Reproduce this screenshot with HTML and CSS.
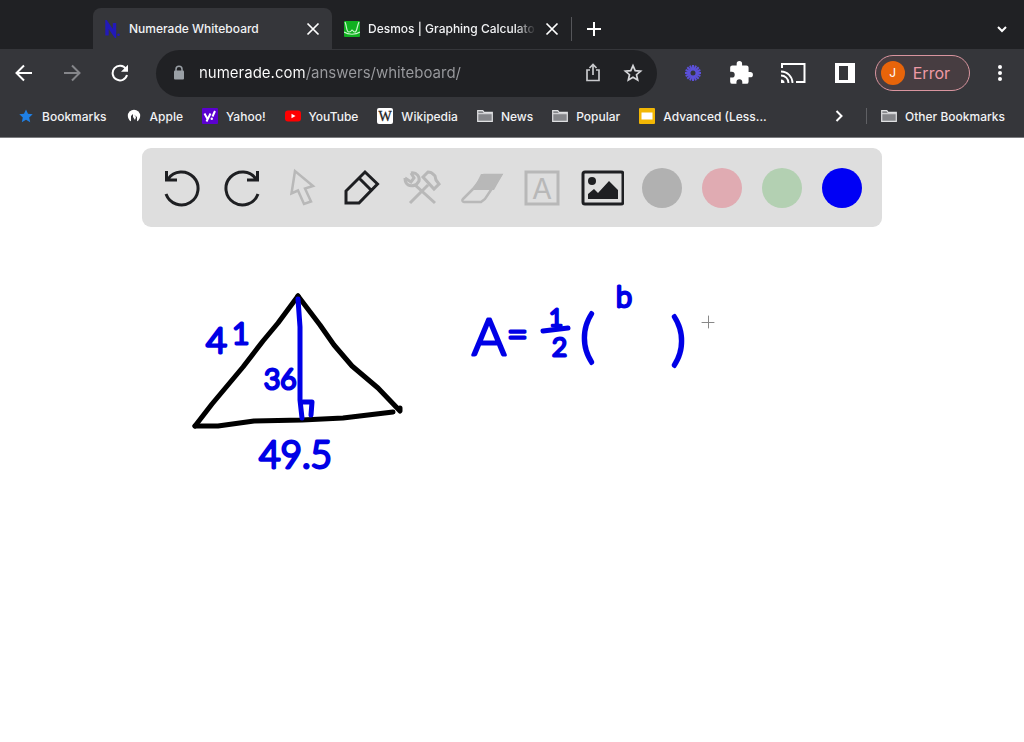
FILE: index.html
```html
<!doctype html>
<html lang="en">
<head>
    <meta charset="UTF-8">
    <title>Numerade Whiteboard</title>
    <link rel="stylesheet" href="styles.css">
</head>

<body>
<svg class="defs" width="0" height="0">
    <symbol id="folder" viewBox="0 0 16 16">
        <path d="M.7 13.3V2.7h5.1l1.3 1.6h8.2v9z" fill="#85868a" stroke="#e0e1e3" stroke-width="1.2"/>
        <path d="M1 5.7h14" stroke="#e0e1e3"/>
    </symbol>
    <symbol id="close" viewBox="0 0 14 14">
        <path d="M1.5 1.5l11 11M12.5 1.5l-11 11" stroke="#fff" stroke-width="1.7" fill="none"/>
    </symbol>
</svg>

<div class="tabs" role="tablist">
    <div class="tab active" role="tab" aria-selected="true">
        <svg width="18" height="18" viewBox="0 0 18 18"><path d="M4 15.500V3.500l7.500 11V3" fill="none" stroke="#2219b8" stroke-width="3.400"/><circle cx="15.500" cy="14.800" r="1.300" fill="#2219b8"/></svg>
        <span class="title">Numerade Whiteboard</span>
        <button class="close" aria-label="Close tab"><svg width="14" height="14"><use href="#close"/></svg></button>
    </div>
    <div class="tab" role="tab" aria-selected="false">
        <svg width="16" height="16" viewBox="0 0 16 16"><rect width="16" height="16" rx="1" fill="#10b020"/><path d="M1 1c2 4 1 10 4 10s2-2 3-2 1 2 3 2 2-6 4-10M0 11c4 3 12 3 16 0" fill="none" stroke="#c8f5ca" stroke-width="1.200"/></svg>
        <span class="title fade">Desmos | Graphing Calculato</span>
        <button class="close" aria-label="Close tab"><svg width="14" height="14"><use href="#close"/></svg></button>
    </div>
    <button class="new-tab" aria-label="New tab"><svg width="14" height="14" viewBox="0 0 14 14"><path d="M7 0v14M0 7h14" stroke="#fff" stroke-width="2"/></svg></button>
    <button class="tab-search" aria-label="Search tabs"><svg width="10" height="8" viewBox="0 0 10 8"><path d="M1 2l4 4 4-4" fill="none" stroke="#fff" stroke-width="2"/></svg></button>
</div>

<div class="toolbar">
    <button class="nav" aria-label="Back"><svg width="18" height="18" viewBox="0 0 18 18"><path d="M17 9H2M9 1.5L1.5 9 9 16.5" fill="none" stroke="#fff" stroke-width="2"/></svg></button>
    <button class="nav" aria-label="Forward"><svg width="18" height="18" viewBox="0 0 18 18"><path d="M1 9h15M9 1.5L16.500 9 9 16.500" fill="none" stroke="#85868a" stroke-width="2"/></svg></button>
    <button class="nav" aria-label="Reload"><svg width="18" height="18" viewBox="0 0 18 18"><path d="M15 5A7.300 7.300 0 1 0 16 11" fill="none" stroke="#fff" stroke-width="2"/><path d="M17 .8v7h-7z" fill="#fff"/></svg></button>
    <div class="address">
        <svg width="12" height="16" viewBox="0 0 12 16"><path d="M3 7V4.200a3 3 0 0 1 6 0V7" fill="none" stroke="#9aa0a6" stroke-width="1.500"/><rect x="1" y="5.500" width="10" height="9" rx="1" fill="#9aa0a6"/></svg>
        <input class="url" type="text" aria-label="Address" value="numerade.com/answers/whiteboard/">
        <button class="in-bar" aria-label="Share"><svg width="16" height="20" viewBox="0 0 16 20"><path d="M5 7H2v10.500h12V7h-3M8 12V2M4.500 5L8 1.500 11.500 5" fill="none" stroke="#c8c9cc" stroke-width="1.700"/></svg></button>
        <button class="in-bar" aria-label="Bookmark this tab"><svg width="20" height="20" viewBox="0 0 20 20"><path d="M10 2.600l2.200 5 5.400.5-4.100 3.600 1.200 5.300-4.700-2.800L5.300 17l1.200-5.300L2.400 8.100l5.400-.5z" fill="none" stroke="#d5d6d9" stroke-width="1.700"/></svg></button>
    </div>
    <button class="ext small" aria-label="Recorder"><svg width="18" height="18" viewBox="0 0 18 18"><g stroke="#5b50d8" stroke-width="2"><path d="M9 1v16M1 9h16M3.300 3.300l11.400 11.400M14.700 3.300L3.300 14.700"/><path d="M6 1.600l6 14.800M12 1.600L6 16.400M1.600 6l14.800 6M1.600 12l14.800-6"/></g><circle cx="9" cy="9" r="2.500" fill="#35363a"/></svg></button>
    <button class="ext" aria-label="Extensions"><svg width="26" height="26" viewBox="0 0 24 24"><path d="M20.500 11H19V7a2 2 0 0 0-2-2h-4V3.500a2.500 2.500 0 0 0-5 0V5H4a2 2 0 0 0-2 2v3.800h1.500a2.700 2.700 0 0 1 0 5.400H2V20a2 2 0 0 0 2 2h3.800v-1.500a2.700 2.700 0 0 1 5.400 0V22H17a2 2 0 0 0 2-2v-4h1.500a2.500 2.500 0 0 0 0-5z" fill="#fff"/></svg></button>
    <button class="ext" aria-label="Cast"><svg width="26" height="22" viewBox="0 0 26 22"><path d="M2 6V2h22.500v18H16" fill="none" stroke="#fff" stroke-width="2"/><path d="M1 17.500v3.500h3.500A3.500 3.500 0 0 0 1 17.500z" fill="#fff"/><path d="M1 13.500A7.500 7.500 0 0 1 8.500 21M1 9.500A11.500 11.500 0 0 1 12.500 21" fill="none" stroke="#fff" stroke-width="1.800"/></svg></button>
    <button class="ext" aria-label="Side panel"><svg width="20" height="20" viewBox="0 0 20 20"><path d="M0 0h20v20H0zM4 3v14h9V3z" fill="#fff" fill-rule="evenodd"/></svg></button>
    <button class="profile"><span class="avatar">J</span>Error</button>
    <button class="menu" aria-label="Menu"><svg width="4" height="16" viewBox="0 0 4 16"><circle cx="2" cy="2" r="2" fill="#fff"/><circle cx="2" cy="8" r="2" fill="#fff"/><circle cx="2" cy="14" r="2" fill="#fff"/></svg></button>
</div>

<nav class="bookmarks">
    <a href="#"><svg width="16" height="16" viewBox="0 0 16 16"><path d="M8 1.500l2 4.300 4.700.5-3.500 3.200 1 4.700L8 11.800l-4.200 2.400 1-4.700L1.300 6.300 6 5.800z" fill="#1f80e6"/></svg>Bookmarks</a>
    <a href="#"><svg width="16" height="16" viewBox="0 0 16 16"><circle cx="8" cy="8" r="6.200" fill="#fff"/><path d="M5 15V8l2-2 4 3v6" fill="#35363a"/><path d="M7 5l3 4-1 3-2-3z" fill="#fff"/></svg>Apple</a>
    <a href="#"><svg width="16" height="16" viewBox="0 0 16 16"><rect width="16" height="16" rx="1" fill="#5b01d0"/><path d="M2.500 5.500l3 5.500M8.500 5.500l-4 8M13 3l-2.500 5.500" stroke="#fff" stroke-width="2"/><circle cx="9.800" cy="10.800" r="1.200" fill="#fff"/></svg>Yahoo!</a>
    <a href="#"><svg width="16" height="16" viewBox="0 0 16 16"><rect y="2.500" width="16" height="11" rx="3" fill="#f00"/><path d="M6.500 5.700L10.500 8l-4 2.300z" fill="#fff"/></svg>YouTube</a>
    <a href="#"><svg width="16" height="16" viewBox="0 0 16 16"><rect width="16" height="16" rx="2" fill="#fff"/><text class="wiki" x="8" y="13" text-anchor="middle">W</text></svg>Wikipedia</a>
    <a href="#"><svg width="16" height="16"><use href="#folder"/></svg>News</a>
    <a href="#"><svg width="16" height="16"><use href="#folder"/></svg>Popular</a>
    <a href="#"><svg width="16" height="16" viewBox="0 0 16 16"><rect width="16" height="16" rx="1" fill="#f2b705"/><rect x="2.500" y="4.500" width="11" height="7" fill="#fff"/></svg>Advanced (Less...</a>
    <button class="more" aria-label="More bookmarks"><svg width="8" height="12" viewBox="0 0 8 12"><path d="M1.500 1l5 5-5 5" fill="none" stroke="#fff" stroke-width="2"/></svg></button>
    <a class="other" href="#"><svg width="16" height="16"><use href="#folder"/></svg>Other Bookmarks</a>
</nav>

<main class="board">
    <svg class="ink" viewBox="0 138 1024 604" preserveAspectRatio="xMinYMin meet">
        <!-- triangle -->
        <g class="black">
            <path d="M298 296L278 323 263 341 243 367 212 404 195 426"/>
            <path d="M298 296L320 325 334 345 352 366 378 388 400 411V408"/>
            <path d="M195 426L218 426 254 421 302 420 343 418 393 412"/>
        </g>
        <!-- height, right angle mark, fraction bar -->
        <g class="blue">
            <path d="M298 299L300 327V400L302 418"/>
            <path d="M303 402L312 402 311 415"/>
            <path d="M543 331L568 328"/>
        </g>
        <g class="pen">
            <text x="206" y="353" font-size="36">4</text>
            <text x="232" y="344" font-size="30">1</text>
            <text x="264" y="389" font-size="28">36</text>
            <text x="259" y="468" font-size="37">49.5</text>
            <text x="472" y="355" font-size="52">A</text>
            <text x="507" y="347" font-size="36">=</text>
            <text x="549" y="326" font-size="24">1</text>
            <text x="552" y="356" font-size="26">2</text>
            <text x="580" y="356" font-size="58">(</text>
            <text x="616" y="307" font-size="29">b</text>
            <text x="671" y="359" font-size="58">)</text>
        </g>
        <path class="cursor" d="M702 322.500h12M708.500 316v12"/>
    </svg>

    <div class="tools">
        <button aria-label="Undo"><svg width="40" height="40" viewBox="0 0 40 40"><path d="M4.500 3v9H15M6 11A16.500 16.500 0 1 1 4 26" fill="none" stroke="#1e1f22" stroke-width="3"/></svg></button>
        <button aria-label="Redo"><svg width="40" height="40" viewBox="0 0 40 40"><path d="M35.500 3v9H25M34 11A16.500 16.500 0 1 0 36 26" fill="none" stroke="#1e1f22" stroke-width="3"/></svg></button>
        <button aria-label="Select"><svg width="40" height="40" viewBox="0 0 40 40"><path d="M13 3L9.500 25.500l6.500-3 6 13.500 7-2.500-6-13 8-2.500z" fill="none" stroke="#b8b8b8" stroke-width="2.500"/></svg></button>
        <button aria-label="Pen"><svg width="40" height="40" viewBox="0 0 40 40"><path d="M4 35V23L23 4l12.500 12L17 35zM17 10l12 12" fill="none" stroke="#1e1f22" stroke-width="3"/></svg></button>
        <button aria-label="Tools"><svg width="40" height="40" viewBox="0 0 40 40"><g fill="none" stroke="#b8b8b8" stroke-width="3"><path d="M3 10c0 7 5 9 10 7l20 18M9 5c6-1 9 4 8 8l-3 4M9 5l3 5-3 4-6-4"/><path d="M8 35l18-18M21 9l5-5c4 0 5 2 7 4l1 4 3 4-5 5z"/></g></svg></button>
        <button aria-label="Eraser"><svg width="44" height="40" viewBox="0 0 44 40"><path d="M21 6h22L34 22H13z" fill="#b8b8b8"/><path d="M13 21L3 31c-1 1-1 3 1 3h17l4-3 16-24H24z" fill="none" stroke="#b8b8b8" stroke-width="2.500"/></svg></button>
        <button aria-label="Text"><svg width="40" height="40" viewBox="0 0 40 40"><rect x="4" y="4" width="32" height="32" fill="none" stroke="#b8b8b8" stroke-width="3"/><text class="letter" x="20" y="31" text-anchor="middle">A</text></svg></button>
        <button aria-label="Image"><svg width="44" height="40" viewBox="0 0 44 40"><rect x="3" y="4" width="40" height="32" rx="2" fill="none" stroke="#1e1f22" stroke-width="3"/><circle cx="12" cy="13" r="4" fill="#1e1f22"/><path d="M8 31v-5l6-5 4 4 11-12 9 9v9z" fill="#1e1f22"/></svg></button>
        <button aria-label="Gray"><span class="color gray"></span></button>
        <button aria-label="Red"><span class="color red"></span></button>
        <button aria-label="Green"><span class="color green"></span></button>
        <button aria-label="Blue"><span class="color full-blue"></span></button>
    </div>
</main>
</body>
</html>
```
FILE: styles.css
```css
* {
    padding: 0;
    margin: 0;
    box-sizing: border-box;
}

body {
    display: flex;
    flex-direction: column;
    min-height: 100vh;
    background: #fff;
    font-family: Inter, "Liberation Sans", sans-serif;
    font-size: 12px;
    font-weight: 500;
    color: #f1f2f4;
}

button {
    border: 0;
    background: none;
    font: inherit;
    color: inherit;
    display: flex;
    align-items: center;
    justify-content: center;
    cursor: pointer;
}

svg {
    display: block;
    flex: none;
}

.defs {
    position: absolute;
}

/* tab strip */
.tabs {
    display: flex;
    height: 49px;
    padding: 8px 0 0 93px;
    background: #202124;
}

.tab {
    display: flex;
    align-items: center;
    gap: 8px;
    width: 239px;
    padding: 0 11px 0 10px;
    border-radius: 8px 8px 0 0;
}

.tab.active {
    background: #35363a;
}

.tab .title {
    flex: 1;
    overflow: hidden;
    white-space: nowrap;
}

.tab .fade {
    -webkit-mask-image: linear-gradient(to right, #000 88%, transparent);
    mask-image: linear-gradient(to right, #000 88%, transparent);
}

.tab .close {
    width: 16px;
    height: 16px;
}

.tab + .tab {
    padding-left: 12px;
}

.new-tab {
    width: 44px;
    height: 24px;
    align-self: center;
    border-left: 1px solid #55565a;
}

.tab-search {
    width: 44px;
    margin-left: auto;
}

/* address bar row */
.toolbar {
    display: flex;
    align-items: center;
    height: 48px;
    background: #35363a;
}

.nav {
    width: 48px;
    height: 40px;
}

.address {
    flex: 1;
    display: flex;
    align-items: center;
    height: 47px;
    margin: 0 14px 0 12px;
    padding: 0 4px 0 17px;
    border-radius: 24px;
    background: #202124;
}

.url {
    flex: 1;
    min-width: 0;
    height: 32px;
    margin-left: 14px;
    border: 0;
    outline: 0;
    font: 400 15px/32px Inter, "Liberation Sans", sans-serif;
    color: transparent;
    background: linear-gradient(to right, #fff 106px, #9a9b9f 106px);
    -webkit-background-clip: text;
    background-clip: text;
}

.in-bar {
    width: 40px;
    height: 40px;
}

.ext {
    width: 52px;
    height: 40px;
}

.ext.small {
    width: 44px;
}

.profile {
    height: 36px;
    margin-left: 4px;
    padding: 0 19px 0 5px;
    gap: 8px;
    border: 1px solid #d9959f;
    border-radius: 18px;
    background: #473d41;
    color: #ee9aa5;
    font-size: 16px;
    font-weight: 400;
}

.avatar {
    width: 24px;
    height: 24px;
    border-radius: 50%;
    background: #e8640a;
    color: #fff;
    font-size: 12px;
    line-height: 24px;
}

.menu {
    width: 48px;
    height: 40px;
    margin-left: 6px;
}

/* bookmarks row */
.bookmarks {
    display: flex;
    align-items: center;
    gap: 19px;
    height: 41px;
    padding: 0 19px 2px 18px;
    background: #35363a;
    border-bottom: 1px solid #7c7d80;
}

.bookmarks a {
    display: flex;
    align-items: center;
    gap: 8px;
    color: inherit;
    text-decoration: none;
    white-space: nowrap;
}

.bookmarks .more {
    width: 24px;
    height: 24px;
    margin-left: auto;
    margin-right: -4px;
}

.bookmarks .other {
    padding-left: 14px;
    border-left: 1px solid #5f6064;
}

.wiki {
    font: 400 14px "Liberation Serif", serif;
    fill: #222;
    stroke: #222;
    stroke-width: .3px;
}

/* drawing board */
.board {
    flex: 1;
    position: relative;
    padding: 10px;
}

.ink {
    position: absolute;
    left: 0;
    top: 0;
    width: 100%;
}

.ink path {
    fill: none;
    stroke-linecap: round;
    stroke-linejoin: round;
}

.ink .black {
    stroke: #000;
    stroke-width: 5px;
}

.ink .blue {
    stroke: #0000e6;
    stroke-width: 5px;
}

.ink .pen {
    font-family: Lato, "Liberation Sans", sans-serif;
    font-weight: 300;
    fill: #0000e6;
    stroke: #0000e6;
    stroke-width: 3px;
    stroke-linejoin: round;
}

.ink .cursor {
    stroke: #888;
    stroke-width: 1px;
}

.tools {
    position: relative;
    display: grid;
    grid-template-columns: repeat(12, 1fr);
    max-width: 740px;
    height: 79px;
    margin: 0 auto;
    padding: 0 10px;
    border-radius: 9px;
    background: #dedede;
}

.letter {
    font: 400 29px Inter, "Liberation Sans", sans-serif;
    fill: #b8b8b8;
}

.color {
    width: 40px;
    height: 40px;
    border-radius: 50%;
}

.gray {
    background: #b1b1b1;
}

.red {
    background: #e0abb2;
}

.green {
    background: #b3d0b2;
}

.full-blue {
    background: #0000f5;
}
```
